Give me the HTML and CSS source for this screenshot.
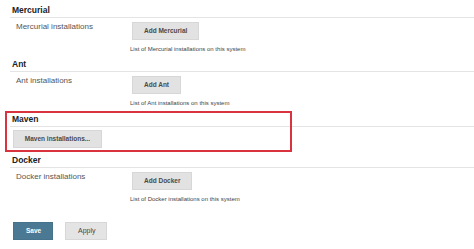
FILE: index.html
```html
<!DOCTYPE html>
<html>
<head>
<meta charset="utf-8">
<link rel="stylesheet" href="styles.css">
</head>
<body>
<div class="page">
  <section class="sec">
    <div class="sec-head">Mercurial</div>
    <div class="row">
      <div class="label">Mercurial installations</div>
      <div class="field">
        <button class="btn">Add Mercurial</button>
        <div class="desc">List of Mercurial installations on this system</div>
      </div>
    </div>
  </section>
  <section class="sec">
    <div class="sec-head">Ant</div>
    <div class="row">
      <div class="label">Ant installations</div>
      <div class="field">
        <button class="btn">Add Ant</button>
        <div class="desc">List of Ant installations on this system</div>
      </div>
    </div>
  </section>
  <section class="sec sec-maven">
    <div class="sec-head">Maven</div>
    <div class="maven-row">
      <button class="btn btn-wide">Maven installations...</button>
    </div>
    <span class="highlight"></span>
  </section>
  <section class="sec sec-docker">
    <div class="sec-head">Docker</div>
    <div class="row">
      <div class="label">Docker installations</div>
      <div class="field">
        <button class="btn">Add Docker</button>
        <div class="desc">List of Docker installations on this system</div>
      </div>
    </div>
  </section>
  <div class="actions">
    <button class="btn btn-primary">Save</button>
    <button class="btn btn-apply">Apply</button>
  </div>
</div>
</body>
</html>
```
FILE: styles.css
```css
html, body {
  margin: 0;
  padding: 0;
  background: #ffffff;
}
body {
  font-family: "Liberation Sans", Arial, sans-serif;
  color: #333;
}
.page {
  width: 474px;
  height: 249px;
  overflow: hidden;
}
.sec {
  position: relative;
}
.sec-head {
  margin-left: 10px;
  padding: 4px 0 1px 2px;
  line-height: 12px;
  font-size: 8.5px;
  font-weight: bold;
  color: #222;
  border-bottom: 1px solid #e4e4e4;
}
.row {
  display: flex;
  padding-left: 16px;
  padding-bottom: 1px;
}
.label {
  width: 114px;
  padding-top: 3px;
  line-height: 12px;
  font-size: 8px;
  color: #555;
}
.field {
  display: flex;
  flex-direction: column;
  align-items: flex-start;
}
.btn {
  box-sizing: border-box;
  height: 18px;
  margin: 4px 0 0 2px;
  padding: 0 11px;
  border: 1px solid #d7d7d7;
  background: #e2e2e2;
  font-family: "Liberation Sans", Arial, sans-serif;
  font-size: 6.5px;
  font-weight: bold;
  color: #4a4a4a;
  line-height: 16px;
  border-radius: 0;
}
.desc {
  margin-top: 5px;
  line-height: 8px;
  font-size: 6px;
  color: #444;
  white-space: nowrap;
}
.sec-maven .sec-head {
  margin-top: 1px;
}
.maven-row {
  padding-left: 11px;
}
.maven-row .btn {
  margin-top: 3px;
}
.btn-wide {
  width: 89px;
  padding: 0;
}
.highlight {
  position: absolute;
  left: 5px;
  top: 2px;
  width: 287px;
  height: 41px;
  box-sizing: border-box;
  border: 2px solid #d8333f;
  pointer-events: none;
}
.sec-docker .sec-head {
  margin-top: 2px;
}
.actions {
  display: flex;
  gap: 12px;
  padding-left: 13px;
  margin-top: 18px;
}
.actions .btn {
  margin: 0;
  padding: 0 12px;
}
.btn-primary {
  width: 40px;
  background: #4b7892;
  border-color: #46728b;
  color: #fff;
  padding: 0;
}
.btn-apply {
  width: 42px;
  background: #e4e4e4;
  color: #444;
  font-weight: normal;
  font-size: 7px;
  padding: 0;
}
```
